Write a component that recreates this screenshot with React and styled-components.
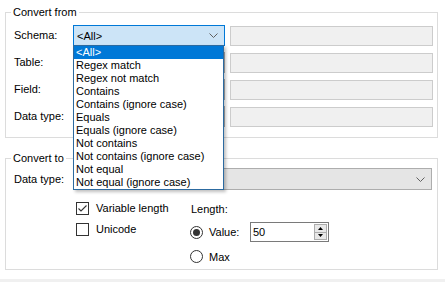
import React from 'react';
import styled, { createGlobalStyle } from 'styled-components';

const GlobalStyle = createGlobalStyle`
  body {
    margin: 0;
    background: #ffffff;
    font-family: 'Liberation Sans', Arial, sans-serif;
    font-size: 11px;
    color: #000000;
  }
`;

const Page = styled.div`
  width: 445px;
  height: 282px;
  display: flex;
  flex-direction: column;
  overflow: hidden;
`;

const Main = styled.div`
  flex: 1;
  background: #ffffff;
  padding-left: 5px;
`;

const Footer = styled.div`
  height: 3px;
  background: #f0f0f0;
`;

const GroupBox = styled.div`
  position: relative;
  box-sizing: border-box;
  width: 433px;
  height: ${(p) => p.$height}px;
  margin-top: ${(p) => p.$top}px;
  border: 1px solid #dcdcdc;
  padding: ${(p) => p.$padTop}px 4px 0 8px;
`;

const GroupTitle = styled.span`
  position: absolute;
  top: -7px;
  left: 5px;
  padding: 0 2px;
  background: #ffffff;
  line-height: 13px;
`;

const FieldGrid = styled.div`
  display: grid;
  grid-template-columns: 54px 152px 203px;
  grid-auto-rows: 21px;
  column-gap: 5px;
  row-gap: 6px;
`;

const Label = styled.div`
  display: flex;
  align-items: center;
  line-height: 13px;
  white-space: nowrap;
`;

const ComboWrap = styled.div`
  position: relative;
`;

const Combo = styled.div`
  box-sizing: border-box;
  height: ${(p) => p.$h || 21}px;
  display: flex;
  align-items: center;
  justify-content: space-between;
  padding: 0 6px 0 3px;
  border: 1px solid ${(p) => (p.$open ? '#0078d7' : '#adadad')};
  background: ${(p) => (p.$open ? '#cce4f7' : '#e5e5e5')};
`;

const Chevron = () => (
  <svg width="9" height="5" viewBox="0 0 9 5">
    <polyline points="0.5,0.5 4.5,4.5 8.5,0.5" fill="none" stroke="#606060" strokeWidth="1" />
  </svg>
);

const TextField = styled.div`
  box-sizing: border-box;
  height: 20px;
  align-self: end;
  border: 1px solid #cccccc;
  background: #f0f0f0;
`;

const DropList = styled.ul`
  position: absolute;
  z-index: 5;
  top: 20px;
  left: 0;
  box-sizing: border-box;
  width: 151px;
  margin: 0;
  padding: 0;
  list-style: none;
  background: #ffffff;
  border: 1px solid #2c6aa0;
  box-shadow: 2px 2px 3px rgba(0, 0, 0, 0.25);
`;

const DropItem = styled.li`
  height: 13px;
  line-height: 13px;
  padding-left: 2px;
  white-space: nowrap;
  background: ${(p) => (p.$active ? '#0078d7' : 'transparent')};
  color: ${(p) => (p.$active ? '#ffffff' : '#000000')};
`;

const TypeRow = styled.div`
  display: grid;
  grid-template-columns: 59px 359px;
  height: 22px;
`;

const Options = styled.div`
  display: flex;
  margin: 12px 0 0 62px;
`;

const Column = styled.div`
  display: flex;
  flex-direction: column;
  width: ${(p) => p.$w}px;
`;

const CheckRow = styled.div`
  display: flex;
  align-items: center;
  gap: 7px;
  height: 13px;
  line-height: 13px;
  margin-bottom: 8px;
`;

const Box = styled.div`
  box-sizing: border-box;
  width: 13px;
  height: 13px;
  border: 1px solid #333333;
  background: #ffffff;
  display: flex;
  align-items: center;
  justify-content: center;
`;

const Radio = styled.div`
  box-sizing: border-box;
  width: 13px;
  height: 13px;
  border: 1px solid #333333;
  border-radius: 50%;
  display: flex;
  align-items: center;
  justify-content: center;
  &::after {
    content: '';
    width: 7px;
    height: 7px;
    border-radius: 50%;
    background: ${(p) => (p.$on ? '#333333' : 'transparent')};
  }
`;

const LengthLabel = styled.div`
  line-height: 13px;
  margin: 1px 0 6px 1px;
`;

const RadioRow = styled.div`
  display: flex;
  align-items: center;
  height: ${(p) => p.$h}px;
  margin-bottom: ${(p) => p.$mb || 0}px;
`;

const RadioText = styled.span`
  margin-left: 6px;
  width: ${(p) => (p.$w ? `${p.$w}px` : 'auto')};
`;

const Spin = styled.div`
  box-sizing: border-box;
  width: 79px;
  height: 20px;
  border: 1px solid #7a7a7a;
  display: flex;
  align-items: center;
  justify-content: space-between;
  padding: 0 1px 0 2px;
  background: #ffffff;
`;

const SpinButtons = styled.div`
  display: flex;
  flex-direction: column;
  width: 13px;
  height: 16px;
`;

const SpinHalf = styled.div`
  flex: 1;
  box-sizing: border-box;
  border: 1px solid #adadad;
  background: #e8e8e8;
  display: flex;
  align-items: center;
  justify-content: center;
  & + & {
    border-top: none;
  }
`;

const Arrow = ({ up }) => (
  <svg width="5" height="3" viewBox="0 0 5 3">
    <polygon points={up ? '0,3 5,3 2.5,0' : '0,0 5,0 2.5,3'} fill="#000000" />
  </svg>
);

const items = [
  '<All>',
  'Regex match',
  'Regex not match',
  'Contains',
  'Contains (ignore case)',
  'Equals',
  'Equals (ignore case)',
  'Not contains',
  'Not contains (ignore case)',
  'Not equal',
  'Not equal (ignore case)',
];

export default function App() {
  return (
    <>
      <GlobalStyle />
      <Page>
        <Main>
          <GroupBox $top={12} $height={126} $padTop={12}>
            <GroupTitle>Convert from</GroupTitle>
            <FieldGrid>
              <Label>Schema:</Label>
              <ComboWrap>
                <Combo $open>
                  <span>&lt;All&gt;</span>
                  <Chevron />
                </Combo>
                <DropList>
                  {items.map((t, i) => (
                    <DropItem key={t} $active={i === 0}>{t}</DropItem>
                  ))}
                </DropList>
              </ComboWrap>
              <TextField />

              <Label>Table:</Label>
              <Combo><span /><Chevron /></Combo>
              <TextField />

              <Label>Field:</Label>
              <Combo><span /><Chevron /></Combo>
              <TextField />

              <Label>Data type:</Label>
              <Combo><span /><Chevron /></Combo>
              <TextField />
            </FieldGrid>
          </GroupBox>

          <GroupBox $top={20} $height={112} $padTop={9}>
            <GroupTitle>Convert to</GroupTitle>
            <TypeRow>
              <Label>Data type:</Label>
              <Combo $h={22}><span /><Chevron /></Combo>
            </TypeRow>
            <Options>
              <Column $w={114}>
                <CheckRow>
                  <Box>
                    <svg width="11" height="11" viewBox="0 0 11 11">
                      <polyline points="1.5,5.5 4,8 9.5,2.5" fill="none" stroke="#333333" strokeWidth="1.1" />
                    </svg>
                  </Box>
                  <span>Variable length</span>
                </CheckRow>
                <CheckRow>
                  <Box />
                  <span>Unicode</span>
                </CheckRow>
              </Column>
              <Column $w={140}>
                <LengthLabel>Length:</LengthLabel>
                <RadioRow $h={20} $mb={8}>
                  <Radio $on />
                  <RadioText $w={41}>Value:</RadioText>
                  <Spin>
                    <span>50</span>
                    <SpinButtons>
                      <SpinHalf><Arrow up /></SpinHalf>
                      <SpinHalf><Arrow /></SpinHalf>
                    </SpinButtons>
                  </Spin>
                </RadioRow>
                <RadioRow $h={13}>
                  <Radio />
                  <RadioText>Max</RadioText>
                </RadioRow>
              </Column>
            </Options>
          </GroupBox>
        </Main>
        <Footer />
      </Page>
    </>
  );
}
